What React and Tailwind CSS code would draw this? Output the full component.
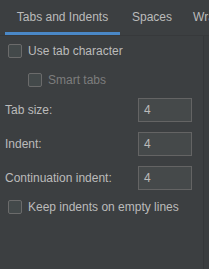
import React from 'react';

const Checkbox = ({ label, disabled }) => (
    <label className="flex items-center h-[14px] gap-[6px]">
        <span className="w-[14px] h-[14px] shrink-0 rounded-[2px] border border-[#6b6b6b] bg-[#43494a]"></span>
        <span className={disabled ? 'text-[#7d7d7d]' : 'text-[#bbbbbb]'}>{label}</span>
    </label>
);

const NumberRow = ({ label, value }) => (
    <div className="flex items-center h-[24px]">
        <span className="w-[133px] text-[#bbbbbb]">{label}</span>
        <div className="w-[54px] h-[24px] border border-[#646464] bg-[#45494a] flex items-center pl-[5px] text-[#bbbbbb]">
            {value}
        </div>
    </div>
);

export default function App() {
    return (
        <div className="w-[209px] h-[269px] bg-[#3c3f41] flex flex-col overflow-hidden text-[12px] leading-none" style={{ fontFamily: '"Liberation Sans", Arial, sans-serif' }}>
            {/* tabs */}
            <div className="h-[36px] shrink-0 flex pl-[5px] border-b border-[#37393b] whitespace-nowrap overflow-hidden">
                <div className="w-[115px] shrink-0 h-[35px] flex flex-col">
                    <div className="flex-1 flex items-center justify-center text-[#bbbbbb] pt-[2px]">Tabs and Indents</div>
                    <div className="h-[3px] bg-[#4a88c7]"></div>
                </div>
                <div className="shrink-0 pl-[12px] pr-[12px] h-[32px] flex items-center text-[#bbbbbb] pt-[2px]">Spaces</div>
                <div className="shrink-0 pl-[9px] h-[32px] flex items-center text-[#bbbbbb] pt-[2px]">Wrapping</div>
            </div>
            <div className="flex flex-1">
                {/* content */}
                <div className="w-[203px] shrink-0 flex flex-col pt-[8px]">
                    <div className="pl-[8px]">
                        <Checkbox label="Use tab character" />
                    </div>
                    <div className="pl-[28px] mt-[15px]">
                        <Checkbox label="Smart tabs" disabled />
                    </div>
                    <div className="pl-[5px] mt-[11px] flex flex-col gap-[10px]">
                        <NumberRow label="Tab size:" value="4" />
                        <NumberRow label="Indent:" value="4" />
                        <NumberRow label="Continuation indent:" value="4" />
                    </div>
                    <div className="pl-[8px] mt-[10px]">
                        <Checkbox label="Keep indents on empty lines" />
                    </div>
                </div>
                <div className="flex-1 bg-[#3a3d3f] border-l border-[#353739]"></div>
            </div>
        </div>
    );
}
